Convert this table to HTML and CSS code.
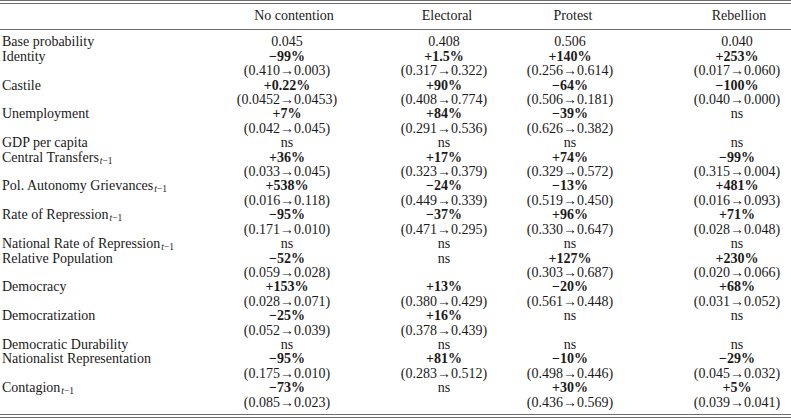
FILE: index.html
```html
<!DOCTYPE html>
<html>
<head>
<meta charset="utf-8">
<link rel="stylesheet" href="styles.css">
</head>
<body>
<div class="tbl">
  <div class="grid head">
    <div class="lab"></div>
    <div class="c c1">No contention</div>
    <div class="c c2">Electoral</div>
    <div class="c c3">Protest</div>
    <div class="c c4">Rebellion</div>
  </div>
  <div class="grid body">
    <div class="lab">Base probability</div>
    <div class="c c1">0.045</div><div class="c c2">0.408</div><div class="c c3">0.506</div><div class="c c4">0.040</div>

    <div class="lab">Identity</div>
    <div class="c c1"><b>−99%</b><span>(0.410→0.003)</span></div>
    <div class="c c2"><b>+1.5%</b><span>(0.317→0.322)</span></div>
    <div class="c c3"><b>+140%</b><span>(0.256→0.614)</span></div>
    <div class="c c4"><b>+253%</b><span>(0.017→0.060)</span></div>

    <div class="lab">Castile</div>
    <div class="c c1"><b>+0.22%</b><span>(0.0452→0.0453)</span></div>
    <div class="c c2"><b>+90%</b><span>(0.408→0.774)</span></div>
    <div class="c c3"><b>−64%</b><span>(0.506→0.181)</span></div>
    <div class="c c4"><b>−100%</b><span>(0.040→0.000)</span></div>

    <div class="lab">Unemployment</div>
    <div class="c c1"><b>+7%</b><span>(0.042→0.045)</span></div>
    <div class="c c2"><b>+84%</b><span>(0.291→0.536)</span></div>
    <div class="c c3"><b>−39%</b><span>(0.626→0.382)</span></div>
    <div class="c c4">ns</div>

    <div class="lab">GDP per capita</div>
    <div class="c c1">ns</div><div class="c c2">ns</div><div class="c c3">ns</div><div class="c c4">ns</div>

    <div class="lab">Central Transfers<sub><i>t</i>−1</sub></div>
    <div class="c c1"><b>+36%</b><span>(0.033→0.045)</span></div>
    <div class="c c2"><b>+17%</b><span>(0.323→0.379)</span></div>
    <div class="c c3"><b>+74%</b><span>(0.329→0.572)</span></div>
    <div class="c c4"><b>−99%</b><span>(0.315→0.004)</span></div>

    <div class="lab">Pol. Autonomy Grievances<sub><i>t</i>−1</sub></div>
    <div class="c c1"><b>+538%</b><span>(0.016→0.118)</span></div>
    <div class="c c2"><b>−24%</b><span>(0.449→0.339)</span></div>
    <div class="c c3"><b>−13%</b><span>(0.519→0.450)</span></div>
    <div class="c c4"><b>+481%</b><span>(0.016→0.093)</span></div>

    <div class="lab">Rate of Repression<sub><i>t</i>−1</sub></div>
    <div class="c c1"><b>−95%</b><span>(0.171→0.010)</span></div>
    <div class="c c2"><b>−37%</b><span>(0.471→0.295)</span></div>
    <div class="c c3"><b>+96%</b><span>(0.330→0.647)</span></div>
    <div class="c c4"><b>+71%</b><span>(0.028→0.048)</span></div>

    <div class="lab">National Rate of Repression<sub><i>t</i>−1</sub></div>
    <div class="c c1">ns</div><div class="c c2">ns</div><div class="c c3">ns</div><div class="c c4">ns</div>

    <div class="lab">Relative Population</div>
    <div class="c c1"><b>−52%</b><span>(0.059→0.028)</span></div>
    <div class="c c2">ns</div>
    <div class="c c3"><b>+127%</b><span>(0.303→0.687)</span></div>
    <div class="c c4"><b>+230%</b><span>(0.020→0.066)</span></div>

    <div class="lab">Democracy</div>
    <div class="c c1"><b>+153%</b><span>(0.028→0.071)</span></div>
    <div class="c c2"><b>+13%</b><span>(0.380→0.429)</span></div>
    <div class="c c3"><b>−20%</b><span>(0.561→0.448)</span></div>
    <div class="c c4"><b>+68%</b><span>(0.031→0.052)</span></div>

    <div class="lab">Democratization</div>
    <div class="c c1"><b>−25%</b><span>(0.052→0.039)</span></div>
    <div class="c c2"><b>+16%</b><span>(0.378→0.439)</span></div>
    <div class="c c3">ns</div>
    <div class="c c4">ns</div>

    <div class="lab">Democratic Durability</div>
    <div class="c c1">ns</div><div class="c c2">ns</div><div class="c c3">ns</div><div class="c c4">ns</div>

    <div class="lab">Nationalist Representation</div>
    <div class="c c1"><b>−95%</b><span>(0.175→0.010)</span></div>
    <div class="c c2"><b>+81%</b><span>(0.283→0.512)</span></div>
    <div class="c c3"><b>−10%</b><span>(0.498→0.446)</span></div>
    <div class="c c4"><b>−29%</b><span>(0.045→0.032)</span></div>

    <div class="lab">Contagion<sub><i>t</i>−1</sub></div>
    <div class="c c1"><b>−73%</b><span>(0.085→0.023)</span></div>
    <div class="c c2">ns</div>
    <div class="c c3"><b>+30%</b><span>(0.436→0.569)</span></div>
    <div class="c c4"><b>+5%</b><span>(0.039→0.041)</span></div>
  </div>
</div>
</body>
</html>
```

FILE: styles.css
```css
html, body {
  margin: 0;
  padding: 0;
  background: #ffffff;
}

.tbl {
  width: 791px;
  font-family: "Liberation Serif", "Times New Roman", serif;
  font-size: 14px;
  line-height: 14.4px;
  color: #1a1a1a;
  border-top: 1px solid #6e6e6e;
  border-bottom: 1px solid #6e6e6e;
  padding-top: 2px;
  padding-bottom: 2px;
}

.grid {
  display: grid;
  grid-template-columns: 232px 136px 140px 132px 151px;
}

.head {
  border-top: 1px solid #6e6e6e;
  border-bottom: 1px solid #6e6e6e;
  padding-top: 5px;
  padding-bottom: 6px;
}

.body {
  border-bottom: 1px solid #6e6e6e;
  padding-top: 5px;
  padding-bottom: 4px;
}

.lab {
  padding-left: 2px;
  white-space: nowrap;
}

.c {
  display: flex;
  flex-direction: column;
  align-items: center;
  white-space: nowrap;
}

.c b {
  font-weight: bold;
}

.c1 { padding-right: 26px; }
.c2 { padding-left: 12px; }
.c3 { padding-right: 8px; }
.c4 { padding-left: 43px; }

.head .c1 { padding-right: 12px; }
.head .c2 { padding-left: 18px; }
.head .c3 { padding-right: 2px; }
.head .c4 { padding-left: 47px; }

.lab sub {
  font-size: 9.5px;
  line-height: 0;
  vertical-align: -2px;
  margin-left: 1px;
}
```
